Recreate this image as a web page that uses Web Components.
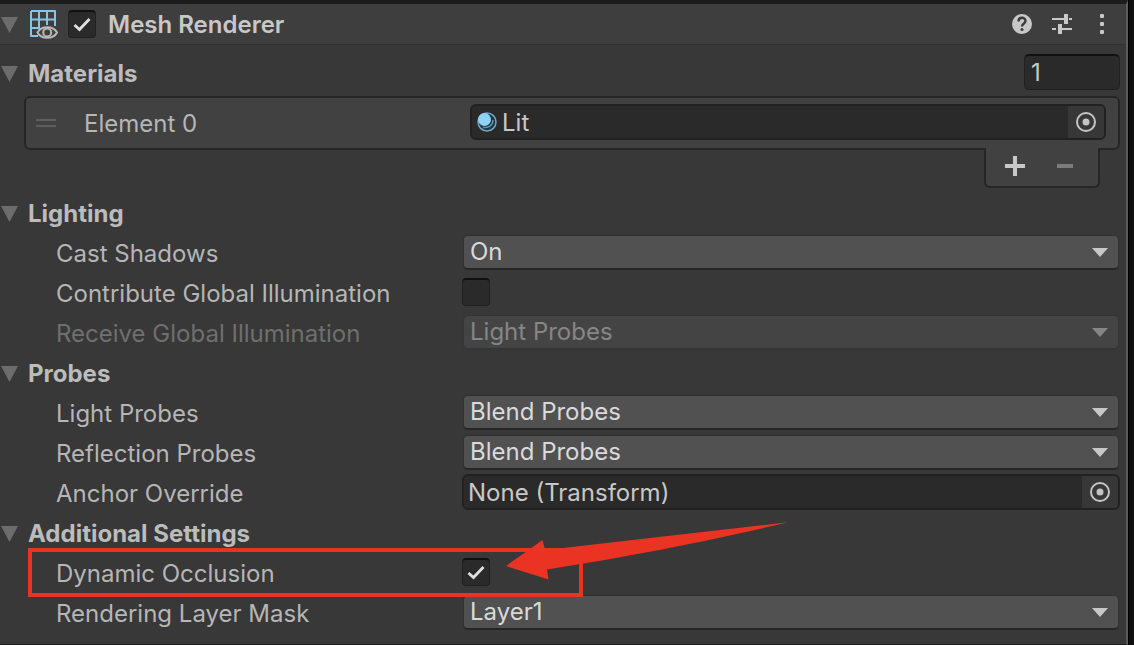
<!DOCTYPE html>
<html lang="en">
<head>
<meta charset="utf-8">
<title>Mesh Renderer</title>
<style>
  html { background: #0e0e0e; }
  body { margin: 0; font: 24px/40px Inter, "Liberation Sans", sans-serif; color: #b8b8b8; }
</style>
</head>
<body>
<inspector-panel>
  <component-header heading="Mesh Renderer"></component-header>
  <fold-section heading="Materials">
    <count-field slot="aside" label="Materials size" value="1"></count-field>
    <reorder-list>
      <object-field label="Element 0" value="Lit" icon="material"></object-field>
    </reorder-list>
  </fold-section>
  <fold-section heading="Lighting">
    <select-field label="Cast Shadows" value="On"></select-field>
    <check-field label="Contribute Global Illumination"></check-field>
    <select-field label="Receive Global Illumination" value="Light Probes" disabled></select-field>
  </fold-section>
  <fold-section heading="Probes">
    <select-field label="Light Probes" value="Blend Probes"></select-field>
    <select-field label="Reflection Probes" value="Blend Probes"></select-field>
    <object-field label="Anchor Override" value="None (Transform)"></object-field>
  </fold-section>
  <fold-section heading="Additional Settings">
    <call-out>
      <check-field label="Dynamic Occlusion" checked></check-field>
    </call-out>
    <select-field label="Rendering Layer Mask" value="Layer1"></select-field>
  </fold-section>
</inspector-panel>

<script>
const base = `
  *, *::before { box-sizing: border-box; }
  :host { display: block; }
  svg { display: block; }
  button, input, select { font: inherit; color: inherit; margin: 0; padding: 0; border: 0; background: none; border-radius: 0; min-width: 0; }
`;
const foldArrow = `<svg width="18" height="16" viewBox="0 0 18 16"><path d="M1 0H18L9.5 16Z" fill="#6c6c6c"/></svg>`;
const tickBox = (attrs) => `<span class="tick"><input type="checkbox" ${attrs}><svg width="28" height="28" viewBox="0 0 28 28"><path d="M6.5 15L11.500 19.500L21.500 9" fill="none" stroke="#e0e0e0" stroke-width="2.800"/></svg></span>`;
const tickStyle = `
  .tick { display: grid; width: 28px; height: 28px; }
  .tick > * { grid-area: 1 / 1; }
  .tick input { appearance: none; width: 28px; height: 28px; background: #2a2a2a; border: 1px solid #212121; border-top: 2px solid #111; border-radius: 4px; }
  .tick svg { pointer-events: none; visibility: hidden; }
  .tick input:checked + svg { visibility: visible; }
`;

class Part extends HTMLElement {
  connectedCallback() {
    if (this.shadowRoot) return;
    this.attachShadow({ mode: "open" }).innerHTML = `<style>${base}${this.css()}</style>${this.html()}`;
  }
  attr(name) { return this.getAttribute(name) || ""; }
  css() { return ""; }
  html() { return "<slot></slot>"; }
}

customElements.define("inspector-panel", class extends Part {
  css() { return `
    :host { min-height: 100vh; box-sizing: border-box; margin-right: 6px; background: #383838;
      border-top: 4px solid #1c1c1c; border-right: 2px solid #5c5c5c; border-bottom: 1px solid #222; box-shadow: 1px 0 #000; }
    main { display: block; }`; }
  html() { return `<main><slot></slot></main>`; }
});

customElements.define("component-header", class extends Part {
  css() { return tickStyle + `
    header { display: flex; align-items: center; height: 41px; margin-bottom: 8px; background: #3e3e3e; border-bottom: 1px solid #303030; color: #c8c8c8; padding-right: 14px; }
    .fold { display: grid; align-items: center; width: 28px; height: 40px; padding-top: 2px; }
    h1 { flex: 1; margin: 0 0 0 12px; padding-top: 2px; font-size: 24px; font-weight: 600; line-height: 40px; }
    .mesh { margin-right: 10px; }
    .tools { display: flex; gap: 20px; }
    .tools button { width: 20px; height: 24px; }`; }
  html() { return `<header>
    <button class="fold" aria-label="Collapse component">${foldArrow}</button>
    <svg class="mesh" width="30" height="30" viewBox="0 0 30 30" fill="none">
      <path d="M3 2H27V17M3 2V27H10M3 10.500H27M3 19H12M11 2V19M19 2V16" stroke="#86c5ea" stroke-width="2" stroke-linejoin="round"/>
      <path d="M9.500 23.500C13 16.500 25.500 16.500 29 23.500C25.500 30.500 13 30.500 9.500 23.500Z" fill="#3e3e3e" stroke="#b9b9b9" stroke-width="2"/>
      <circle cx="19.200" cy="23.500" r="4" fill="#3e3e3e" stroke="#b9b9b9" stroke-width="2"/>
    </svg>
    ${tickBox('checked aria-label="Component enabled"')}
    <h1>${this.attr("heading")}</h1>
    <div class="tools">
      <button aria-label="Help"><svg width="20" height="24" viewBox="0 0 20 24" fill="none"><circle cx="10" cy="12" r="10" fill="#c8c8c8"/><path d="M6.500 9.500C6.500 4.500 13.500 4.700 13.500 9C13.500 11.500 10 11.500 10 14.500" stroke="#3a3a3a" stroke-width="2.400"/><circle cx="10" cy="17.500" r="1.500" fill="#3a3a3a"/></svg></button>
      <button aria-label="Presets"><svg width="20" height="24" viewBox="0 0 20 24" fill="none" stroke="#c8c8c8"><path d="M0 7H13M17 7H20M0 17H4M8 17H20" stroke-width="2"/><path d="M14 2V12M8 12V22" stroke-width="4"/></svg></button>
      <button aria-label="More"><svg width="20" height="24" viewBox="0 0 20 24" fill="#c8c8c8"><rect x="8" y="2" width="4" height="4" rx="1"/><rect x="8" y="10" width="4" height="4" rx="1"/><rect x="8" y="18" width="4" height="4" rx="1"/></svg></button>
    </div>
  </header>`; }
});

customElements.define("fold-section", class extends Part {
  css() { return `
    .bar { display: flex; justify-content: space-between; height: 40px; padding-right: 6px; }
    h2 { margin: 0; font-size: 24px; font-weight: 700; color: #bcbcbc; }
    button { display: flex; align-items: center; gap: 10px; height: 42px; line-height: 42px; white-space: nowrap; }`; }
  html() { return `<section>
    <div class="bar"><h2><button aria-expanded="true">${foldArrow}${this.attr("heading")}</button></h2><slot name="aside"></slot></div>
    <slot></slot></section>`; }
});

customElements.define("count-field", class extends Part {
  css() { return `
    :host { padding-top: 1px; }
    input { display: block; width: 96px; height: 36px; padding: 1px 6px 0; background: #2a2a2a; border: 1px solid #212121; border-top: 2px solid #111; border-radius: 5px; color: #c8c8c8; }`; }
  html() { return `<input type="text" aria-label="${this.attr("label")}" value="${this.attr("value")}">`; }
});

customElements.define("reorder-list", class extends Part {
  css() { return `
    :host { margin: 3px 6px 5px 24px; }
    .item { display: flex; align-items: center; height: 54px; padding: 0 12px 0 10px; background: #414141; border: 2px solid #262626; border-radius: 6px; }
    .grip { width: 20px; height: 8px; border: solid #5e5e5e; border-width: 2px 0; }
    slot { display: block; flex: 1; --label-column: 414px; --label-pad: 28px; --field-end: 0px; }
    .foot { display: flex; width: 116px; height: 40px; margin: -2px 20px 0 auto; background: #414141; border: 2px solid #262626; border-top: 0; border-radius: 0 0 6px 6px; position: relative; padding: 0 8px 2px 4px; }
    .foot button { flex: 1; display: grid; place-items: center; }`; }
  html() { return `
    <div class="item"><span class="grip"></span><slot></slot></div>
    <div class="foot">
      <button aria-label="Add element"><svg width="20" height="20" viewBox="0 0 20 20"><path d="M0 10H20M10 0V20" stroke="#c8c8c8" stroke-width="4"/></svg></button>
      <button aria-label="Remove element"><svg width="20" height="20" viewBox="0 0 20 20"><path d="M2 10H18" stroke="#7c7c7c" stroke-width="4"/></svg></button>
    </div>`; }
});

class Field extends Part {
  css() { return `
    .row { display: grid; grid-template-columns: var(--label-column, 462px) minmax(0, 1fr); align-items: start; height: 40px; padding-right: var(--field-end, 6px); }
    label { padding-left: var(--label-pad, 56px); line-height: 42px; white-space: nowrap; color: #b6b6b6; }
    ${this.controlCss()}`; }
  html() { return `<div class="row"><label for="control">${this.attr("label")}</label>${this.control()}</div>`; }
}

customElements.define("select-field", class extends Field {
  controlCss() { return `
    .box { display: grid; align-items: center; margin: 2px 1px 0; }
    .box > * { grid-area: 1 / 1; }
    select { appearance: none; width: 100%; height: 35px; padding: 0 32px 0 6px; line-height: 32px; color: #dadada; background: #515151; border: 1px solid #303030; border-bottom: 2px solid #262626; border-radius: 5px; opacity: 1; }
    svg { justify-self: end; margin-right: 11px; pointer-events: none; }
    :host([disabled]) label { color: #6f6f6f; }
    :host([disabled]) select { color: #868686; background: #444; border-color: #353535; }
    :host([disabled]) svg { opacity: .5; }`; }
  control() { return `<div class="box"><select id="control" ${this.hasAttribute("disabled") ? "disabled" : ""}><option>${this.attr("value")}</option></select>
    <svg width="16" height="10" viewBox="0 0 16 10"><path d="M0 0H16L8 9Z" fill="#c8c8c8"/></svg></div>`; }
});

customElements.define("check-field", class extends Field {
  controlCss() { return tickStyle + `.tick { margin-top: 5px; }`; }
  control() { return tickBox(`id="control" ${this.hasAttribute("checked") ? "checked" : ""}`); }
});

customElements.define("object-field", class extends Field {
  controlCss() { return `
    .box { display: flex; align-items: center; height: 36px; margin-top: 1px; overflow: hidden; background: #2a2a2a; border: 2px solid #212121; border-radius: 6px; color: #c8c8c8; }
    input { flex: 1; height: 32px; padding: 2px 0 0 4px; }
    .icon { margin: 0 1px 0 5px; }
    button { display: grid; place-items: center; width: 36px; height: 32px; background: #373737; }`; }
  control() {
    const icon = this.attr("icon") === "material"
      ? `<svg class="icon" width="20" height="20" viewBox="0 0 20 20"><circle cx="10" cy="10" r="9" fill="#25333b" stroke="#6aa9c9" stroke-width="1.500"/><path d="M16 8C16 13 12 16 6 15.500" fill="none" stroke="#5b93b0" stroke-width="1.500"/><circle cx="7.500" cy="7.500" r="6.500" fill="#8fd3f8"/></svg>` : "";
    return `<div class="box">${icon}<input id="control" type="text" readonly value="${this.attr("value")}">
      <button aria-label="Pick object"><svg width="20" height="20" viewBox="0 0 20 20"><circle cx="10" cy="10" r="9" fill="none" stroke="#c4c4c4" stroke-width="2"/><circle cx="10" cy="10" r="3.500" fill="#c4c4c4"/></svg></button></div>`;
  }
});

/* Outlines the slotted row and points an arrow at its control. */
customElements.define("call-out", class extends Part {
  css() { return `
    :host { position: relative; }
    .frame { position: absolute; z-index: 1; left: 28px; top: -5px; width: 555px; height: 49px; border: 4px solid #eb3323; pointer-events: none; }
    svg { position: absolute; z-index: 2; left: 506px; top: -32px; pointer-events: none; }`; }
  html() { return `<slot></slot><div class="frame"></div>
    <svg width="284" height="60" viewBox="0 0 284 60"><path d="M0 45L36.500 19L38.500 27H57Q170 14 282 1.300Q165 29 41 48.500L42.500 58.500Z" fill="#eb3323"/></svg>`; }
});
</script>
</body>
</html>
